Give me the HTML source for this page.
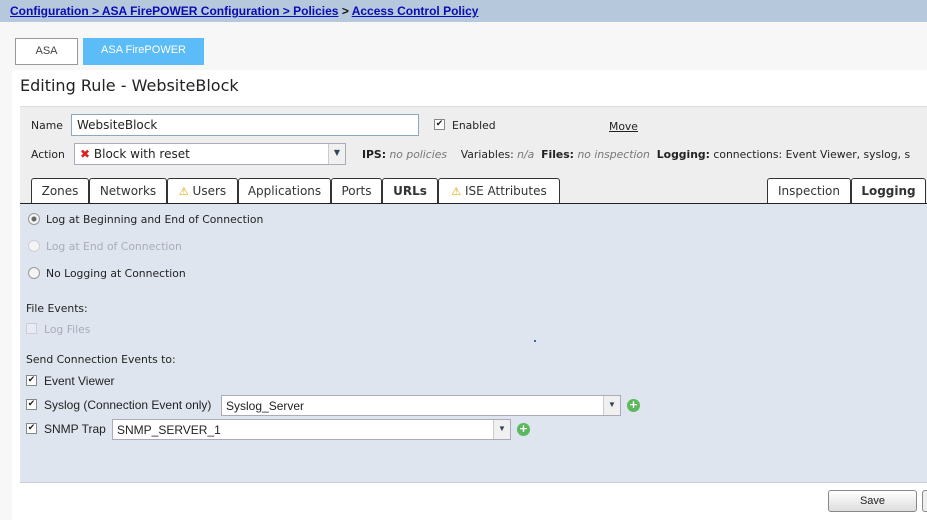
<!DOCTYPE html>
<html><head><style>
*{box-sizing:border-box;margin:0;padding:0}
body{width:927px;height:520px;overflow:hidden;background:#f7f7f7;font-family:"DejaVu Sans","Liberation Sans",sans-serif;font-size:10.8px;color:#222;position:relative}
.a{position:absolute}
.top{left:0;top:0;width:927px;height:22px;background:#b6c8dc}
.top span{position:absolute;left:10px;top:4px;font-family:"Liberation Sans",sans-serif;font-weight:bold;font-size:12px;color:#0b0bb5}
.top u{color:#0b0bb5}
.tab{font-family:"Liberation Sans",sans-serif;font-size:11px;text-align:center;line-height:25px}
.tabs div{position:absolute;top:178px;height:26px;background:#fff;border:1px solid #333;border-bottom:none;border-radius:3px 3px 0 0;text-align:center;line-height:24px;font-size:12px;color:#333}
.warn{color:#e0a000;font-size:11px}
.inp{background:#fff;border:1px solid #aab}
.sel .arr{position:absolute;right:0;top:0;bottom:0;width:17px;border-left:1px solid #ccc;background:#f0f0f0;text-align:center;font-size:8px;line-height:18px;color:#345}
.cb{width:11px;height:11px;border:1px solid #888;background:#fff;font-size:9px;line-height:9px;text-align:center}
.rd{width:12px;height:12px;border:1px solid #999;border-radius:50%;background:#f4f4f4}
.plus{width:13px;height:13px;border-radius:50%;background:#5cb85c;color:#fff;font-size:11px;line-height:12px;text-align:center;font-weight:bold}
.n{font-family:"Liberation Sans",sans-serif;font-size:12px;color:#222}
</style></head><body>
<div class="a top"><span><u>Configuration &gt; ASA FirePOWER Configuration &gt; Policies</u> <span style="position:static;color:#111">&gt;</span> <u>Access Control Policy</u></span></div>
<div class="a tab" style="left:15px;top:38px;width:63px;height:27px;background:#fff;border:1px solid #999;color:#444">ASA</div>
<div class="a tab" style="left:83px;top:38px;width:121px;height:27px;background:#5bbcf8;color:#fff">ASA FirePOWER</div>
<div class="a" style="left:12px;top:70px;width:915px;height:450px;background:#fff"></div>
<div class="a" style="left:20px;top:76px;font-size:16px;color:#222">Editing Rule - WebsiteBlock</div>
<div class="a" style="left:20px;top:106px;width:907px;height:98px;background:#eeeeee;border-top:1px solid #ddd"></div>
<div class="a" style="left:31px;top:119px">Name</div>
<div class="a inp" style="left:71px;top:114px;width:348px;height:22px;border-color:#8ab;padding:3px 5px;font-size:12px">WebsiteBlock</div>
<div class="a cb" style="left:434px;top:119px">✔</div>
<div class="a" style="left:452px;top:119px">Enabled</div>
<div class="a" style="left:609px;top:120px;text-decoration:underline">Move</div>
<div class="a" style="left:31px;top:148px">Action</div>
<div class="a inp sel" style="left:74px;top:143px;width:272px;height:22px;padding:3px 5px;font-size:12px"><span style="color:#d22;font-weight:bold">✖</span> Block with reset<div class="arr">▼</div></div>
<div class="a" style="left:362px;top:148px;white-space:nowrap"><b>IPS:</b> <i style="color:#777">no policies</i> &nbsp;&nbsp;&nbsp;Variables: <i style="color:#777">n/a</i> &nbsp;<b>Files:</b> <i style="color:#777">no inspection</i> &nbsp;<b>Logging:</b> connections: Event Viewer, syslog, s</div>
<div class="tabs">
<div style="left:31px;width:58px">Zones</div>
<div style="left:89px;width:78px">Networks</div>
<div style="left:167px;width:71px"><span class="warn">⚠</span> Users</div>
<div style="left:238px;width:93px">Applications</div>
<div style="left:331px;width:51px">Ports</div>
<div style="left:382px;width:56px;font-weight:bold">URLs</div>
<div style="left:438px;width:122px"><span class="warn">⚠</span> ISE Attributes</div>
<div style="left:767px;width:84px">Inspection</div>
<div style="left:851px;width:75px;font-weight:bold">Logging</div>
</div>
<div class="a" style="left:20px;top:203px;width:907px;height:280px;background:#dfe5ef;border-top:1px solid #222;border-bottom:1px solid #c8ced8"></div>
<div class="a rd" style="left:28px;top:213px;background:radial-gradient(#666 2px,#f4f4f4 3px)"></div>
<div class="a" style="left:46px;top:213px">Log at Beginning and End of Connection</div>
<div class="a rd" style="left:28px;top:240px;border-color:#ccd"></div>
<div class="a" style="left:46px;top:240px;color:#aab">Log at End of Connection</div>
<div class="a rd" style="left:28px;top:267px"></div>
<div class="a" style="left:46px;top:267px">No Logging at Connection</div>
<div class="a" style="left:26px;top:302px">File Events:</div>
<div class="a cb" style="left:26px;top:323px;border-color:#ccd;background:#e8ecf2"></div>
<div class="a" style="left:44px;top:323px;color:#aab">Log Files</div>
<div class="a" style="left:26px;top:353px">Send Connection Events to:</div>
<div class="a cb" style="left:26px;top:375px">✔</div>
<div class="a n" style="left:44px;top:374px">Event Viewer</div>
<div class="a cb" style="left:26px;top:399px">✔</div>
<div class="a n" style="left:44px;top:398px">Syslog (Connection Event only)</div>
<div class="a inp sel n" style="left:221px;top:395px;width:400px;height:21px;padding:3px 4px">Syslog_Server<div class="arr">▼</div></div>
<div class="a plus" style="left:627px;top:399px">+</div>
<div class="a cb" style="left:26px;top:423px">✔</div>
<div class="a n" style="left:44px;top:422px">SNMP Trap</div>
<div class="a inp sel n" style="left:112px;top:419px;width:399px;height:21px;padding:3px 4px">SNMP_SERVER_1<div class="arr">▼</div></div>
<div class="a plus" style="left:517px;top:423px">+</div>
<div class="a" style="left:534px;top:340px;width:2px;height:2px;background:#36c"></div>
<div class="a n" style="left:828px;top:490px;width:89px;height:22px;border:1px solid #888;border-radius:3px;background:linear-gradient(#fff,#ddd);text-align:center;line-height:20px;font-size:11px">Save</div>
<div class="a" style="left:922px;top:490px;width:10px;height:22px;border:1px solid #888;border-radius:3px;background:#eee"></div>
</body></html>
